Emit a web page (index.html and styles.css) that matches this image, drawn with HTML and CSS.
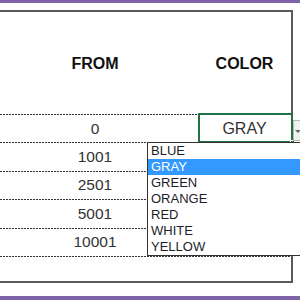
FILE: index.html
```html
<!DOCTYPE html>
<html lang="en">
<head>
  <meta charset="UTF-8">
  <meta name="viewport" content="width=device-width, initial-scale=1.0">
  <title>Color lookup</title>
  <link rel="stylesheet" href="styles.css">
</head>
<body>
  <!-- 顶部色条 -->
  <div class="bar"></div>
  <!-- 表格 -->
  <div class="sheet">
    <div class="row head">
      <div class="cell">FROM</div>
      <div class="cell">COLOR</div>
    </div>
    <div class="row">
      <div class="cell">0</div>
      <div class="cell pick">
        GRAY
        <span class="handle"></span>
        <span class="arrow"></span>
        <!-- 下拉列表 -->
        <ul class="list">
          <li>BLUE</li>
          <li class="current">GRAY</li>
          <li>GREEN</li>
          <li>ORANGE</li>
          <li>RED</li>
          <li>WHITE</li>
          <li>YELLOW</li>
        </ul>
      </div>
    </div>
    <div class="row"><div class="cell">1001</div><div class="cell"></div></div>
    <div class="row"><div class="cell">2501</div><div class="cell"></div></div>
    <div class="row"><div class="cell">5001</div><div class="cell"></div></div>
    <div class="row"><div class="cell">10001</div><div class="cell"></div></div>
    <div class="row empty"></div>
  </div>
  <!-- 底部色条 -->
  <div class="bar bottom"></div>
</body>
</html>
```

FILE: styles.css
```css
/* 清除默认样式 */
* {
  margin: 0;
  padding: 0;
  box-sizing: border-box;
}
ul {
  list-style: none;
}
body {
  width: 300px;
  height: 300px;
  overflow: hidden;
  background: #fff;
  font-family: "Liberation Sans", Arial, sans-serif;
  color: #333;
}
.bar {
  height: 3px;
  background-color: #7f63a8;
}
.bar.bottom {
  height: 4px;
  margin-top: 13px;
}
/* 表格 */
.sheet {
  width: 293px;
  margin-top: 7px;
  border-top: 2px solid #5a5a5a;
  border-right: 2px solid #5a5a5a;
  border-bottom: 2px solid #5a5a5a;
}
.sheet .row {
  display: grid;
  grid-template-columns: 198px 93px;
  height: 28.4px;
  padding-top: 1px;
  background: repeating-linear-gradient(90deg, #333 0 2px, transparent 2px 3px) top left / 100% 1px no-repeat;
}
.sheet .head {
  height: 102px;
  padding-top: 0;
  background: none;
  font-weight: bold;
  color: #111;
}
.sheet .empty {
  height: 25px;
}
.sheet .cell {
  display: flex;
  align-items: center;
  justify-content: center;
  font-size: 15.5px;
}
.sheet .cell:first-child {
  padding-right: 8px;
}
.sheet .head .cell {
  font-size: 16px;
  padding-top: 1px;
}
/* 选中单元格 */
.sheet .pick {
  position: relative;
  font-size: 16px;
}
.sheet .pick::before {
  content: "";
  position: absolute;
  left: 0;
  right: -2px;
  top: -2px;
  bottom: -1px;
  border: 2px solid #217346;
}
.sheet .handle {
  position: absolute;
  right: -4px;
  bottom: -3px;
  width: 5px;
  height: 5px;
  background-color: #217346;
  border: 1px solid #fff;
}
.sheet .arrow {
  position: absolute;
  left: 95px;
  top: 5px;
  width: 7px;
  height: 21px;
  background-color: #f1f1f1;
  border: 1px solid #b9b9b9;
  border-right: none;
}
.sheet .arrow::after {
  content: "";
  position: absolute;
  left: 1px;
  top: 9px;
  border-top: 3px solid #666;
  border-left: 3px solid transparent;
  border-right: 3px solid transparent;
}
/* 下拉列表 */
.sheet .list {
  position: absolute;
  left: -51px;
  top: 27px;
  width: 153px;
  border: 1px solid #333;
  border-right: none;
  background-color: #fff;
  z-index: 2;
}
.sheet .list li {
  height: 16px;
  padding-left: 3px;
  font: 13px/16px "Liberation Sans", Arial, sans-serif;
  color: #1d1d2b;
}
.sheet .list .current {
  background-color: #3399ff;
  color: #fff;
}
```
